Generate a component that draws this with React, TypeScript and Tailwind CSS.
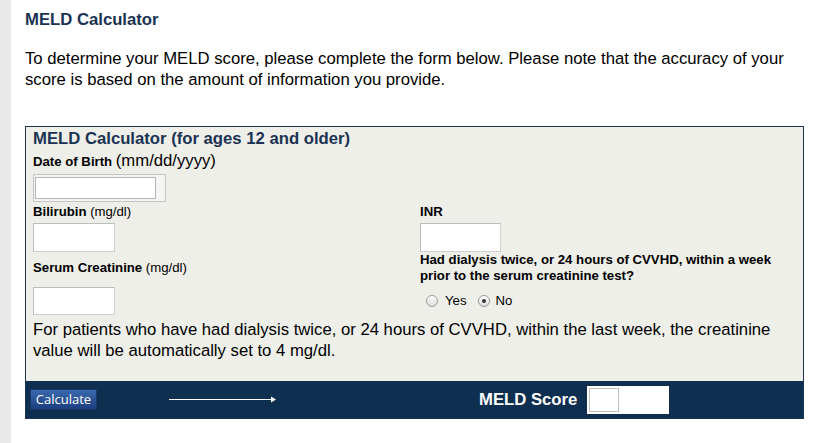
import React from "react"

function Radio({ checked }: { checked?: boolean }) {
    return (
        <span className="w-[12px] h-[12px] rounded-full border border-[#9a9a9a] bg-gradient-to-b from-white to-[#dcdcdc] flex items-center justify-center">
            {checked && <span className="w-[4px] h-[4px] rounded-full bg-[#333]" />}
        </span>
    )
}

export default function App() {
    const [dialysis, setDialysis] = React.useState(false)

    return (
        <div className="min-h-screen flex bg-white font-['Liberation_Sans',Arial,sans-serif] text-black">
            <div className="w-[11px] shrink-0 bg-[#e9e9e9]" />
            <div className="pl-[14px] pt-[11px]">
                <h1 className="text-[16.7px] leading-[18px] font-bold text-[#1b3352]">MELD Calculator</h1>
                <p className="mt-[19px] text-[16.7px] leading-[21px] w-[775px]">
                    To determine your MELD score, please complete the form below. Please note that the accuracy of your score is based on the amount of information you provide.
                </p>

                <div className="mt-[36px] w-[779px] border border-[#1b3352] bg-[#efefea]">
                    <div className="pl-[7px] pt-[3px] pb-[20px]">
                        <h2 className="text-[16.7px] leading-[18px] font-bold text-[#1b3352]">MELD Calculator (for ages 12 and older)</h2>
                        <div className="mt-[4px] leading-[18px]">
                            <span className="text-[13.2px] font-bold">Date of Birth </span>
                            <span className="text-[16.7px]">(mm/dd/yyyy)</span>
                        </div>
                        <div className="mt-[3px] w-[133px] h-[28px] border border-[#c4c4c4] bg-[#f4f4f2] pl-[1px] pt-[2px]">
                            <div className="w-[121px] h-[22px] border border-[#b5b5b5] bg-white" />
                        </div>

                        <div className="mt-[2px] grid grid-cols-[387px_1fr] items-center text-[13.2px] leading-[16px]">
                            <div><span className="font-bold">Bilirubin</span> (mg/dl)</div>
                            <div className="font-bold">INR</div>

                            <div className="mt-[3px] w-[82px] h-[29px] border border-[#cfcfcf] border-t-[#bdbdbd] border-l-[#bdbdbd] bg-white" />
                            <div className="mt-[3px] w-[81px] h-[29px] border border-[#cfcfcf] border-t-[#bdbdbd] border-l-[#bdbdbd] bg-white" />

                            <div><span className="font-bold">Serum Creatinine</span> (mg/dl)</div>
                            <div className="font-bold">
                                Had dialysis twice, or 24 hours of CVVHD, within a week<br />
                                prior to the serum creatinine test?
                            </div>

                            <div className="mt-[3px] w-[82px] h-[28px] border border-[#cfcfcf] border-t-[#bdbdbd] border-l-[#bdbdbd] bg-white" />
                            <div className="mt-[3px] flex items-center pl-[6px]">
                                <button className="flex items-center" onClick={() => setDialysis(true)}>
                                    <Radio checked={dialysis} />
                                    <span className="ml-[7px]">Yes</span>
                                </button>
                                <button className="flex items-center ml-[11px]" onClick={() => setDialysis(false)}>
                                    <Radio checked={!dialysis} />
                                    <span className="ml-[6px]">No</span>
                                </button>
                            </div>
                        </div>

                        <p className="mt-[4px] text-[16.7px] leading-[21px] w-[765px]">
                            For patients who have had dialysis twice, or 24 hours of CVVHD, within the last week, the creatinine value will be automatically set to 4 mg/dl.
                        </p>
                    </div>

                    <div className="h-[37px] bg-[#0f2f50] flex items-center">
                        <button className="ml-[4px] w-[67px] h-[21px] bg-gradient-to-b from-[#3b69ae] to-[#1c3f80] border border-[#183868] text-white text-[13px] leading-[19px] font-['Open_Sans',sans-serif]">
                            Calculate
                        </button>
                        <svg className="ml-[72px]" width="108" height="9" viewBox="0 0 108 9">
                            <line x1="0" y1="4.5" x2="103" y2="4.5" stroke="white" strokeWidth="1" />
                            <polygon points="102,1.5 107,4.5 102,7.5" fill="white" />
                        </svg>
                        <span className="ml-[202px] text-[16.7px] font-bold text-white">MELD Score</span>
                        <div className="ml-[10px] w-[82px] h-[28px] bg-white pl-[2px] pt-[2px]">
                            <div className="w-[30px] h-[24px] border border-[#c0c0c0] bg-white" />
                        </div>
                    </div>
                </div>
            </div>
        </div>
    )
}
